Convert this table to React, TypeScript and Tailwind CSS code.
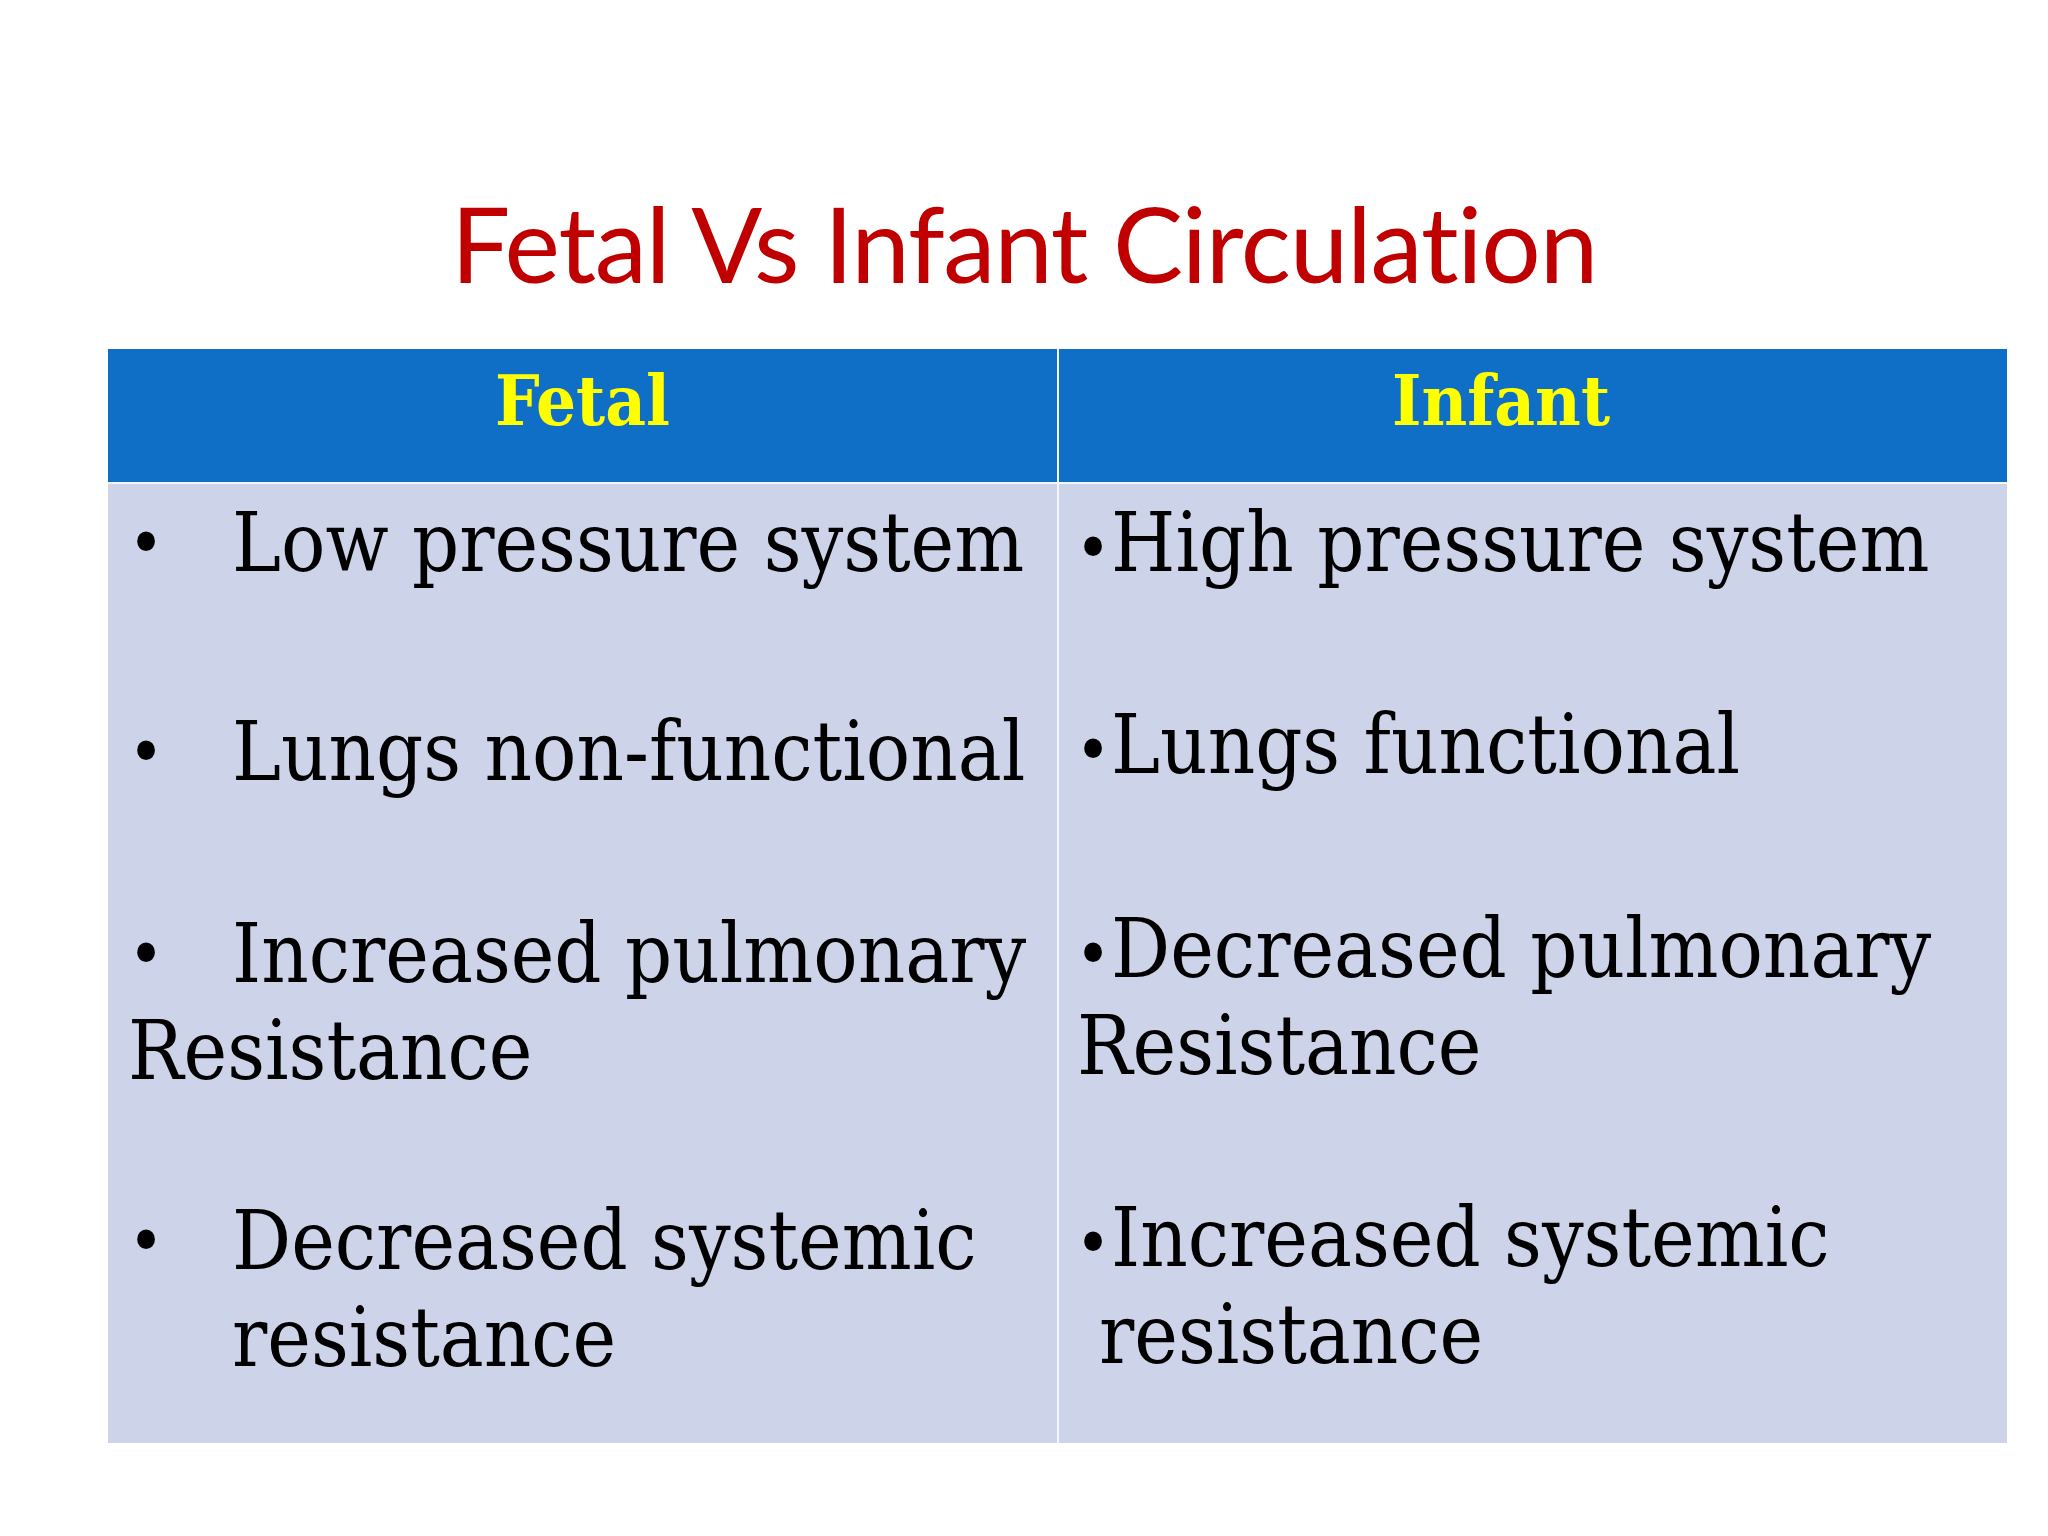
export default function App() {
  const serif = "font-['DejaVu_Serif_Condensed','DejaVu_Serif',serif] font-stretch-condensed";
  const dot = "text-[68px] leading-none";
  return (
    <div className="w-[2048px] h-[1536px] bg-white overflow-hidden">
      <h1 className="pt-[178px] text-center font-['Lato',sans-serif] text-[105px] leading-[128px] tracking-[-1.2px] text-[#c00000]">
        Fetal Vs Infant Circulation
      </h1>
      <div className={`mt-[43px] mx-[108px] w-[1899px] grid grid-cols-[949px_948px] gap-x-[2px] gap-y-[2px] bg-[#f4f6fb] ${serif}`}>
        <div className="h-[133px] bg-[#0f6fc6] text-center text-[#ffff00] font-bold text-[70px] leading-[80px] pt-[12px]">Fetal</div>
        <div className="h-[133px] bg-[#0f6fc6] text-center text-[#ffff00] font-bold text-[70px] leading-[80px] pt-[12px] pr-[64px]">Infant</div>

        <div className="h-[959px] bg-[#cdd4e9] text-black text-[82px] leading-[97px] pl-[20px] pt-[10px]">
          <div className="flex">
            <span className="w-[104px] shrink-0 text-[68px]">•</span>
            <span>Low pressure system</span>
          </div>
          <div className="flex mt-[112px]">
            <span className="w-[104px] shrink-0 text-[68px]">•</span>
            <span>Lungs non-functional</span>
          </div>
          <div className="mt-[105px]">
            <div className="flex">
              <span className="w-[104px] shrink-0 text-[68px]">•</span>
              <span>Increased pulmonary</span>
            </div>
            <div>Resistance</div>
          </div>
          <div className="flex mt-[93px]">
            <span className="w-[104px] shrink-0 text-[68px]">•</span>
            <span>
              Decreased systemic
              <br />
              resistance
            </span>
          </div>
        </div>

        <div className="h-[959px] bg-[#cdd4e9] text-black text-[82px] leading-[97px] pl-[16px] pt-[10px]">
          <div>
            <span className={dot}>•</span>High pressure system
          </div>
          <div className="mt-[105px]">
            <span className={dot}>•</span>Lungs functional
          </div>
          <div className="mt-[107px]">
            <div>
              <span className={dot}>•</span>Decreased pulmonary
            </div>
            <div className="pl-[2px]">Resistance</div>
          </div>
          <div className="mt-[95px]">
            <div>
              <span className={dot}>•</span>Increased systemic
            </div>
            <div className="pl-[24px]">resistance</div>
          </div>
        </div>
      </div>
    </div>
  );
}
